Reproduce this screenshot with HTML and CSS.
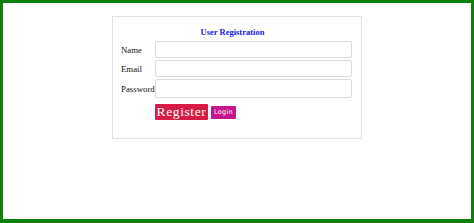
FILE: index.html
```html
<!DOCTYPE html>
<html>
<head>
<meta charset="utf-8">
<link rel="stylesheet" href="styles.css">
</head>
<body>
<div class="frame">
  <form class="card">
    <div class="title">User Registration</div>
    <div class="grid">
      <label class="lbl">Name</label>
      <input class="inp inp-name" type="text">
      <label class="lbl">Email</label>
      <input class="inp inp-email" type="text">
      <label class="lbl">Password</label>
      <input class="inp inp-pass" type="password">
      <span></span>
      <div class="buttons">
        <button type="button" class="btn-register">Register</button>
        <button type="button" class="btn-login">Login</button>
      </div>
    </div>
  </form>
</div>
</body>
</html>
```
FILE: styles.css
```css
html, body {
  margin: 0;
  padding: 0;
  background: #ffffff;
}
.frame {
  box-sizing: border-box;
  width: 474px;
  height: 223px;
  border: 3px solid #0b800b;
  border-bottom-width: 4px;
  padding-top: 13px;
  display: flex;
  justify-content: center;
  align-items: flex-start;
  font-family: "Liberation Serif", serif;
}
.card {
  box-sizing: border-box;
  width: 250px;
  height: 123px;
  margin: 0;
  border: 1px solid #e2e2e2;
  padding: 9px 9px 0 8px;
}
.title {
  text-align: center;
  color: #1a1ae0;
  font-weight: bold;
  font-size: 8.5px;
  line-height: 12px;
  padding-right: 8px;
  margin-bottom: 3px;
}
.grid {
  display: grid;
  grid-template-columns: 34px 197px;
  row-gap: 2px;
  align-items: center;
}
.lbl {
  font-size: 8.8px;
  color: #111;
  white-space: nowrap;
}
.inp {
  box-sizing: border-box;
  width: 197px;
  height: 17px;
  border: 1px solid #dcdcdc;
  border-radius: 2px;
  margin: 0;
  padding: 0;
  background: #fff;
}
.inp-email { height: 17px; }
.inp-pass { height: 19px; margin-top: 0; }
.buttons {
  display: flex;
  align-items: center;
  gap: 3px;
  margin-top: 4px;
}
.btn-register {
  box-sizing: border-box;
  height: 16px;
  width: 53px;
  border: none;
  border-radius: 1px;
  background: #d81b45;
  color: #fff;
  font-family: "Liberation Serif", serif;
  font-size: 13.5px;
  line-height: 16px;
  padding: 0;
  letter-spacing: 0.6px;
}
.btn-login {
  box-sizing: border-box;
  height: 13px;
  width: 25px;
  border: none;
  border-radius: 1px;
  background: #c4168a;
  color: #fff;
  font-family: "DejaVu Sans", sans-serif;
  font-size: 6.5px;
  line-height: 13px;
  padding: 0;
  letter-spacing: 0.3px;
}
```
